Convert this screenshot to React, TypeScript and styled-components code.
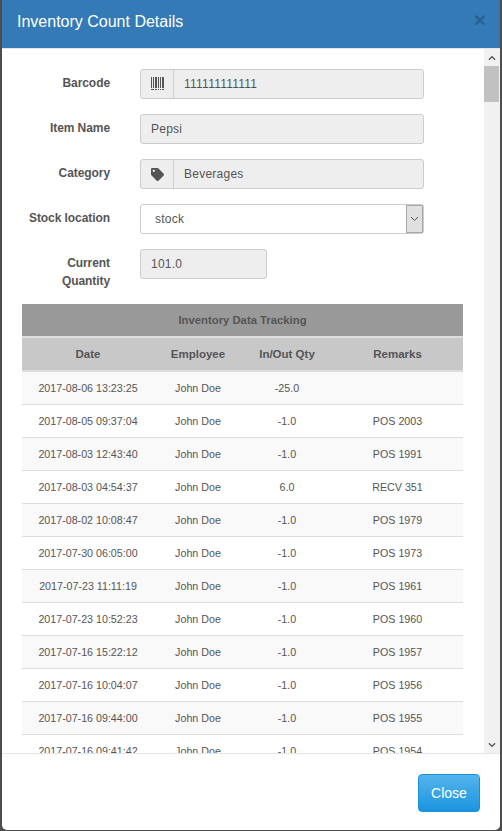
import styled, { createGlobalStyle } from "styled-components"
import { FaTag, FaChevronUp, FaChevronDown } from "react-icons/fa"

const GlobalStyle = createGlobalStyle`
    html, body {
        margin: 0;
        padding: 0;
        height: 100%;
        overflow: hidden;
        background-color: #4d4d4d;
    }

    #root {
        height: 100%;
    }
`;

const Modal = styled.div`
    box-sizing: border-box;
    width: 498px;
    height: 830px;
    margin-left: 2px;
    background-color: white;
    border-radius: 0 0 5px 5px;
    display: flex;
    flex-direction: column;
    overflow: hidden;
    font-family: "Liberation Sans", Arial, sans-serif;
    color: #555;
`;

const Header = styled.div`
    height: 49px;
    flex-shrink: 0;
    background-color: #337ab7;
    display: flex;
    align-items: center;
    justify-content: space-between;
    padding: 0 15px 5px;
    border-bottom: 1px solid #e5e5e5;
    box-sizing: border-box;
`;

const Title = styled.h4`
    margin: 0;
    font-size: 16px;
    font-weight: normal;
    color: white;
`;

const CloseX = styled.span`
    font-size: 21px;
    font-weight: bold;
    line-height: 1;
    color: #000;
    opacity: 0.2;
    margin-top: -5px;
    margin-right: -1px;
`;

const Body = styled.div`
    flex: 1;
    min-height: 0;
    display: flex;
    overflow: hidden;
`;

const Content = styled.div`
    flex: 1;
    min-width: 0;
    padding: 20px 20px 0 20px;
    overflow: hidden;
`;

const Row = styled.div`
    display: flex;
    margin-bottom: 15px;
`;

const Label = styled.label`
    width: 88px;
    flex-shrink: 0;
    margin-right: 30px;
    padding-top: 5px;
    font-size: 12px;
    font-weight: bold;
    line-height: 18px;
    letter-spacing: -0.07px;
    text-align: right;
    color: #555;
`;

const Field = styled.div<{ $narrow?: boolean }>`
    box-sizing: border-box;
    width: ${props => props.$narrow ? '127px' : '284px'};
    height: 30px;
    display: flex;
    align-items: center;
    background-color: #eee;
    border: 1px solid #ccc;
    border-radius: 3px;
    font-size: 12px;
    letter-spacing: 0.25px;
    color: #555;
`;

const Addon = styled.span`
    box-sizing: border-box;
    width: 33px;
    height: 100%;
    flex-shrink: 0;
    display: flex;
    align-items: center;
    justify-content: center;
    border-right: 1px solid #ccc;
    font-size: 13px;
    color: #555;
`;

const FieldText = styled.span`
    padding-left: 10px;
`;

const SelectBox = styled(Field)`
    background-color: white;
    justify-content: space-between;
    padding-left: 14px;
    align-items: stretch;
    line-height: 28px;
`;

const SelectArrow = styled.span`
    box-sizing: border-box;
    width: 17px;
    display: flex;
    align-items: center;
    justify-content: center;
    background-color: #e0e0e0;
    border: 1px solid #a8a8a8;
    color: #555;
`;

const Table = styled.table`
    width: 441px;
    margin-top: -1px;
    border-collapse: collapse;
    table-layout: fixed;
    font-size: 10.7px;
    color: #555;
`;

const Column = styled.col<{ $width: number }>`
    width: ${props => props.$width}px;
`;

const TitleCell = styled.th`
    height: 32px;
    padding: 0;
    background-color: #999;
    border-bottom: 2px solid #ddd;
    font-size: 11.3px;
    font-weight: bold;
    color: #555;
`;

const HeadCell = styled.th`
    height: 32px;
    padding: 0;
    background-color: #c8c8c8;
    border-bottom: 2px solid #ddd;
    font-size: 11.5px;
    font-weight: bold;
    color: #555;
`;

const DataRow = styled.tr<{ $striped: boolean }>`
    background-color: ${props => props.$striped ? '#f9f9f9' : 'white'};
    border-bottom: 1px solid #ddd;
`;

const DataCell = styled.td`
    height: 32px;
    padding: 0;
    text-align: center;
    white-space: nowrap;
`;

const Scrollbar = styled.div`
    width: 16px;
    flex-shrink: 0;
    display: flex;
    flex-direction: column;
    background-color: #f1f1f1;
`;

const ScrollButton = styled.div`
    width: 15px;
    height: 17px;
    display: flex;
    align-items: center;
    justify-content: center;
    color: #505050;
    font-size: 8px;
`;

const ScrollThumb = styled.div`
    width: 15px;
    height: 36px;
    background-color: #c1c1c1;
`;

const ScrollTrack = styled.div`
    flex: 1;
`;

const Footer = styled.div`
    height: 77px;
    flex-shrink: 0;
    box-sizing: border-box;
    border-top: 1px solid #e5e5e5;
    display: flex;
    align-items: flex-start;
    justify-content: flex-end;
    padding: 20px 20px 0 0;
`;

const CloseButton = styled.button`
    width: 62px;
    height: 38px;
    padding: 0;
    border: 1px solid #1b8fd8;
    border-radius: 4px;
    background: linear-gradient(#54b4eb, #1b95e0);
    color: white;
    font-family: inherit;
    font-size: 14px;
`;

const BarcodeIcon = () => (
    <svg width="13" height="14" viewBox="0 0 13 14" fill="currentColor">
        <rect x="0" y="0" width="1" height="11" />
        <rect x="2" y="0" width="1" height="11" />
        <rect x="4" y="0" width="2" height="11" />
        <rect x="7" y="0" width="1" height="11" />
        <rect x="9" y="0" width="1" height="11" />
        <rect x="11" y="0" width="2" height="11" />
        <rect x="0" y="12" width="3" height="1" />
        <rect x="4" y="12" width="2" height="1" />
        <rect x="7" y="12" width="1" height="1" />
        <rect x="9" y="12" width="1" height="1" />
        <rect x="11" y="12" width="2" height="1" />
    </svg>
)

const ArrowIcon = () => (
    <svg width="9" height="6" viewBox="0 0 9 6" fill="none" stroke="currentColor" strokeWidth="1">
        <path d="M1 1l3.5 3.5L8 1" />
    </svg>
)

const rows = [
    ["2017-08-06 13:23:25", "-25.0", ""],
    ["2017-08-05 09:37:04", "-1.0", "POS 2003"],
    ["2017-08-03 12:43:40", "-1.0", "POS 1991"],
    ["2017-08-03 04:54:37", "6.0", "RECV 351"],
    ["2017-08-02 10:08:47", "-1.0", "POS 1979"],
    ["2017-07-30 06:05:00", "-1.0", "POS 1973"],
    ["2017-07-23 11:11:19", "-1.0", "POS 1961"],
    ["2017-07-23 10:52:23", "-1.0", "POS 1960"],
    ["2017-07-16 15:22:12", "-1.0", "POS 1957"],
    ["2017-07-16 10:04:07", "-1.0", "POS 1956"],
    ["2017-07-16 09:44:00", "-1.0", "POS 1955"],
    ["2017-07-16 09:41:42", "-1.0", "POS 1954"],
]

const App = () => {
    return (
        <>
            <GlobalStyle />
            <Modal>
                <Header>
                    <Title>Inventory Count Details</Title>
                    <CloseX>×</CloseX>
                </Header>

                <Body>
                    <Content>
                        <Row>
                            <Label>Barcode</Label>
                            <Field>
                                <Addon><BarcodeIcon /></Addon>
                                <FieldText>111111111111</FieldText>
                            </Field>
                        </Row>

                        <Row>
                            <Label>Item Name</Label>
                            <Field><FieldText>Pepsi</FieldText></Field>
                        </Row>

                        <Row>
                            <Label>Category</Label>
                            <Field>
                                <Addon><FaTag /></Addon>
                                <FieldText>Beverages</FieldText>
                            </Field>
                        </Row>

                        <Row>
                            <Label>Stock location</Label>
                            <SelectBox>
                                stock
                                <SelectArrow><ArrowIcon /></SelectArrow>
                            </SelectBox>
                        </Row>

                        <Row>
                            <Label>Current Quantity</Label>
                            <Field $narrow><FieldText>101.0</FieldText></Field>
                        </Row>

                        <Table>
                            <colgroup>
                                <Column $width={132} />
                                <Column $width={88} />
                                <Column $width={90} />
                                <Column $width={131} />
                            </colgroup>
                            <thead>
                                <tr><TitleCell colSpan={4}>Inventory Data Tracking</TitleCell></tr>
                                <tr>
                                    <HeadCell>Date</HeadCell>
                                    <HeadCell>Employee</HeadCell>
                                    <HeadCell>In/Out Qty</HeadCell>
                                    <HeadCell>Remarks</HeadCell>
                                </tr>
                            </thead>
                            <tbody>
                                {rows.map((row, i) => (
                                    <DataRow key={row[0]} $striped={i % 2 === 0}>
                                        <DataCell>{row[0]}</DataCell>
                                        <DataCell>John Doe</DataCell>
                                        <DataCell>{row[1]}</DataCell>
                                        <DataCell>{row[2]}</DataCell>
                                    </DataRow>
                                ))}
                            </tbody>
                        </Table>
                    </Content>

                    <Scrollbar>
                        <ScrollButton><FaChevronUp /></ScrollButton>
                        <ScrollThumb />
                        <ScrollTrack />
                        <ScrollButton><FaChevronDown /></ScrollButton>
                    </Scrollbar>
                </Body>

                <Footer>
                    <CloseButton>Close</CloseButton>
                </Footer>
            </Modal>
        </>
    )
}

export default App;
